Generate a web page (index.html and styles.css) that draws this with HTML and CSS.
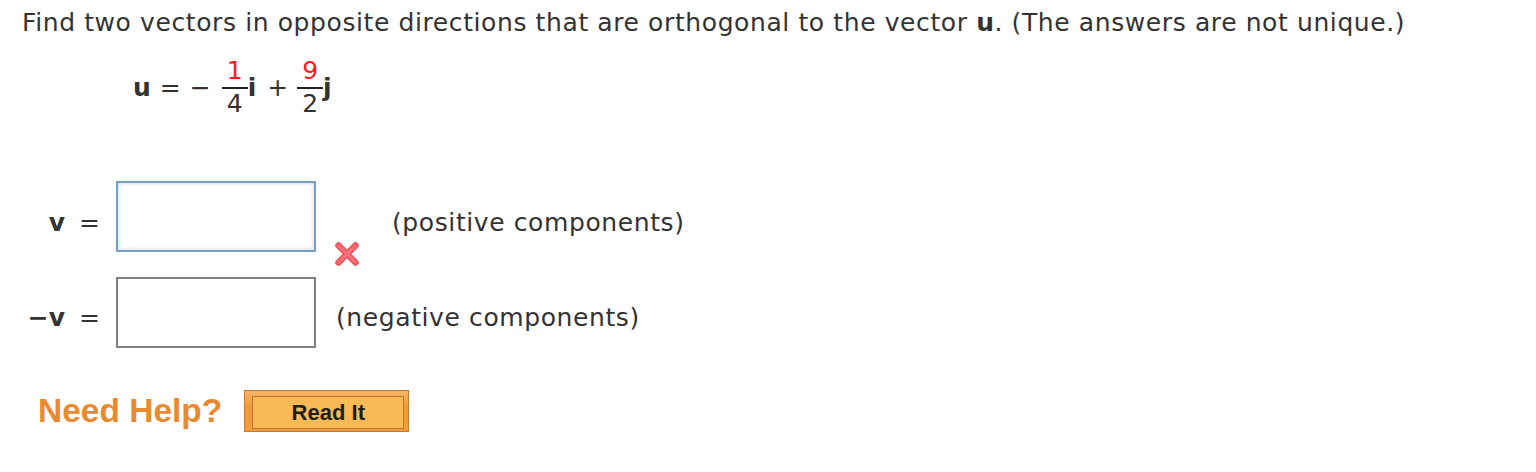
FILE: index.html
```html
<!DOCTYPE html>
<html>
<head>
<meta charset="utf-8">
<link rel="stylesheet" href="styles.css">
</head>
<body>
<div class="page">
  <p class="prompt">Find two vectors in opposite directions that are orthogonal to the vector <b>u</b>. (The answers are not unique.)</p>
  <div class="equation">
    <b class="var">u</b><span class="op">=</span><span class="op op-minus">−</span>
    <span class="frac"><span class="num">1</span><span class="den">4</span></span><b class="unit">i</b>
    <span class="op op-plus">+</span>
    <span class="frac"><span class="num">9</span><span class="den">2</span></span><b class="unit">j</b>
  </div>
  <div class="answers">
    <div class="row">
      <span class="label"><b>v</b><span class="eq">=</span></span>
      <input class="box box-active" type="text">
      <span class="wrong"><svg width="26" height="26" viewBox="0 0 26 26"><path d="M4.5 4.5 L21.5 21.5 M21.5 4.5 L4.5 21.5" stroke="#f0575f" stroke-width="6.5" stroke-linecap="round"/><path d="M5 5 L21 21 M21 5 L5 21" stroke="#f4737a" stroke-width="3" stroke-linecap="round"/></svg></span>
      <span class="hint">(positive components)</span>
    </div>
    <div class="row">
      <span class="label"><b>−v</b><span class="eq">=</span></span>
      <input class="box" type="text">
      <span class="hint hint-near">(negative components)</span>
    </div>
  </div>
  <div class="help">
    <span class="need">Need Help?</span>
    <span class="readit"><span class="readit-inner">Read It</span></span>
  </div>
</div>
</body>
</html>
```
FILE: styles.css
```css
html, body {
  margin: 0;
  background: #ffffff;
}
.page {
  font-family: "DejaVu Sans", Verdana, sans-serif;
  color: #333333;
  font-size: 25px;
  letter-spacing: 0.6px;
  padding: 7px 0 0 22px;
}
.prompt {
  margin: 0;
  line-height: 32px;
}
.equation {
  display: flex;
  align-items: center;
  margin: 18px 0 0 111px;
  height: 60px;
  letter-spacing: 0;
}
.var { margin-right: 9px; }
.op { margin-right: 9px; }
.op-minus { margin-right: 11px; }
.op-plus { margin-right: 9px; }
.frac {
  display: inline-flex;
  flex-direction: column;
  align-items: center;
  line-height: 26px;
}
.num {
  color: #ff1a1a;
  border-bottom: 2px solid #222;
  padding: 0 5px 3px;
}
.den { padding-top: 2px; }
.unit { margin-right: 11px; }
.answers {
  margin-top: 64px;
  display: flex;
  flex-direction: column;
  gap: 10px;
}
.row {
  display: flex;
  align-items: flex-start;
  height: 86px;
}
.row + .row { height: 71px; }
.label {
  width: 78px;
  text-align: right;
  margin-top: 27px;
  margin-right: 16px;
  letter-spacing: 0;
}
.row + .row .label { margin-top: 26px; }
.eq { margin-left: 14px; }
.box {
  width: 200px;
  height: 71px;
  box-sizing: border-box;
  border: 2px solid #808080;
  margin: 0;
  padding: 0;
  background: #fff;
}
.box-active {
  border-color: #789fc4;
  box-shadow: inset 0 0 4px #b8d4f0;
}
.wrong {
  margin: 60px 0 0 18px;
  width: 26px;
  height: 26px;
}
.hint {
  margin: 27px 0 0 32px;
}
.hint-near { margin: 26px 0 0 20px; }
.help {
  display: flex;
  align-items: center;
  margin: 42px 0 0 16px;
}
.need {
  font-family: "Liberation Sans", Arial, sans-serif;
  font-weight: bold;
  font-size: 33.5px;
  letter-spacing: 0;
  color: #ea8a30;
  margin-right: 22px;
}
.readit {
  display: inline-block;
  width: 165px;
  height: 42px;
  box-sizing: border-box;
  border: 1px solid #c27a30;
  background: linear-gradient(#f8b468, #f39a3a 40%, #f39a3a);
  padding: 5px 4px 2px 7px;
}
.readit-inner {
  display: flex;
  align-items: center;
  justify-content: center;
  height: 100%;
  box-sizing: border-box;
  border: 1px solid #b8782e;
  background: #f9b955;
  font-family: "Liberation Sans", Arial, sans-serif;
  font-weight: bold;
  font-size: 22px;
  letter-spacing: 0;
  color: #1e1e1e;
}
```
